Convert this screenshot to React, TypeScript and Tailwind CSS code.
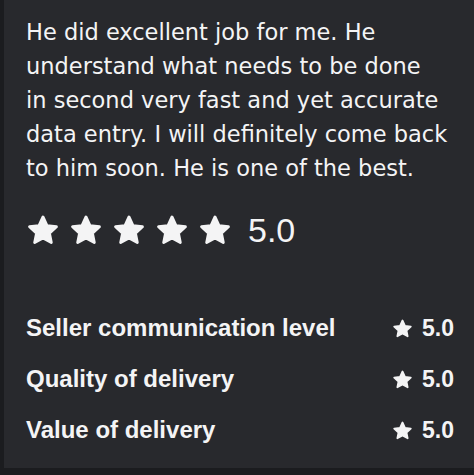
import React from 'react';

function Star({ className }: { className?: string }) {
  return (
    <svg viewBox="0 0 24 24" className={className} fill="currentColor" stroke="currentColor" strokeWidth={2} strokeLinejoin="round">
      <polygon points="12,2.8 14.82,8.92 21.51,9.71 16.57,14.28 17.88,20.89 12,17.6 6.12,20.89 7.43,14.28 2.49,9.71 9.18,8.92" />
    </svg>
  );
}

export default function App() {
  const ratings = [
    { label: 'Seller communication level', value: '5.0' },
    { label: 'Quality of delivery', value: '5.0' },
    { label: 'Value of delivery', value: '5.0' },
  ];

  return (
    <div className="min-h-screen bg-[#1b1c1f] pl-1 pb-[7px] font-['DejaVu_Sans',sans-serif] text-[#f4f4f5]">
      <div className="h-[468px] bg-[#28292d] pl-[22px] pr-[20px] pt-[15px]">
        {/* Review text */}
        <p className="whitespace-nowrap text-[22.5px] leading-[34px]">
          He did excellent job for me. He
          <br />
          understand what needs to be done
          <br />
          in second very fast and yet accurate
          <br />
          data entry. I will definitely come back
          <br />
          to him soon. He is one of the best.
        </p>

        {/* Overall rating */}
        <div className="mt-[28px] flex items-center">
          <div className="flex gap-[9px]">
            {[0, 1, 2, 3, 4].map((i) => (
              <Star key={i} className="w-[34px] h-[34px]" />
            ))}
          </div>
          <span className="ml-[16px] font-['Liberation_Sans',sans-serif] text-[34px] leading-none">5.0</span>
        </div>

        {/* Breakdown */}
        <div className="mt-[67px] flex flex-col gap-[23px]">
          {ratings.map((r) => (
            <div key={r.label} className="flex items-center justify-between">
              <span className="font-['Liberation_Sans',sans-serif] text-[24px] leading-[28px] font-bold">{r.label}</span>
              <span className="flex items-center gap-[9px]">
                <Star className="w-[21px] h-[21px]" />
                <span className="font-['Liberation_Sans',sans-serif] text-[23px] leading-[28px] font-semibold">{r.value}</span>
              </span>
            </div>
          ))}
        </div>
      </div>
    </div>
  );
}
